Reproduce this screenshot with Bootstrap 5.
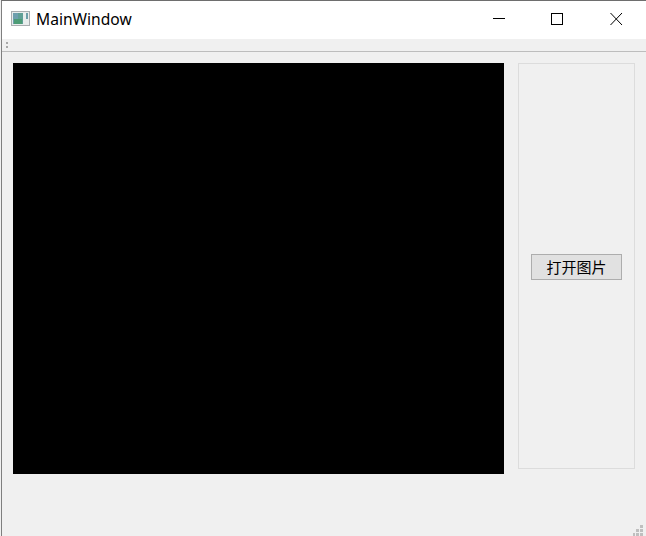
<!DOCTYPE html>
<html lang="zh">
<head>
<meta charset="utf-8">
<title>MainWindow</title>
<link rel="stylesheet" href="https://cdn.jsdelivr.net/npm/bootstrap@5.3.0/dist/css/bootstrap.min.css">
<style>
html,body{margin:0;height:536px;overflow:hidden;background:#f0f0f0;}
.app-win{width:646px;height:536px;padding-left:1px;background:#f0f0f0;position:relative;font-family:"Noto Sans","Liberation Sans",sans-serif;}
.app-edge{border-left:1px solid #7f7f7f;border-top:1px solid #6e6e6e;height:100%;}
.app-title{height:38px;background:#fff;padding-left:9px;padding-bottom:2px;}
.app-title-text{font-family:"Noto Sans","Open Sans",sans-serif;font-size:15.6px;color:#000;margin-left:5px;margin-top:2px;line-height:1;}
.app-caption{width:59px;height:36px;}
.app-tools{height:13px;background:#f0f0f0;border-bottom:1px solid #bdbdbd;padding-left:4px;}
.app-main{padding:11px 11px 0 11px;gap:14px;}
.app-canvas{width:491px;height:411px;background:#000;flex:none;}
.app-panel{width:117px;height:406px;border:1px solid #dcdcdc;flex:none;}
.app-btn{width:91px;height:26px;margin-top:2px;padding:0 0 2px 0;background:#e1e1e1;border:1px solid #adadad;border-radius:0;color:#000;font-family:"Noto Sans CJK SC",sans-serif;font-size:15px;line-height:1;}
.app-btn:hover{background:#e1e1e1;border-color:#adadad;color:#000;}
.app-grip{position:absolute;right:2px;bottom:0;}
</style>
</head>
<body>
<div class="app-win">
  <div class="app-edge d-flex flex-column">
    <div class="app-title d-flex align-items-center">
      <svg width="20" height="16" viewBox="0 0 20 16" aria-hidden="true">
        <rect x="0.5" y="0.5" width="18" height="14" fill="#e8ecec" stroke="#a9adb0"/>
        <rect x="2" y="2" width="10" height="11" fill="#5f9f96"/>
        <rect x="2" y="2" width="5" height="11" fill="#6e9fae"/>
        <rect x="3" y="8" width="8" height="5" fill="#4d9c76"/>
        <rect x="15" y="2" width="2" height="6" fill="#6d9ea9"/>
      </svg>
      <span class="app-title-text">MainWindow</span>
      <div class="ms-auto d-flex">
        <div class="app-caption d-flex align-items-center justify-content-center">
          <svg width="13" height="12" viewBox="0 0 13 12"><path d="M1 5.5H13" stroke="#000" fill="none"/></svg>
        </div>
        <div class="app-caption d-flex align-items-center justify-content-center">
          <svg width="13" height="12" viewBox="0 0 13 12"><rect x="0.5" y="0.5" width="11" height="11" stroke="#000" fill="none"/></svg>
        </div>
        <div class="app-caption d-flex align-items-center justify-content-center">
          <svg width="13" height="12" viewBox="0 0 13 12"><path d="M0.5 0L12 12M12 0L0.5 12" stroke="#000" fill="none"/></svg>
        </div>
      </div>
    </div>
    <div class="app-tools d-flex align-items-center">
      <svg width="3" height="8" viewBox="0 0 3 8"><rect x="0" y="1" width="2" height="2" fill="#a8a8a8"/><rect x="0" y="5" width="2" height="2" fill="#a8a8a8"/></svg>
    </div>
    <div class="app-main d-flex align-items-start">
      <div class="app-canvas"></div>
      <div class="app-panel d-flex align-items-center justify-content-center">
        <button type="button" class="btn app-btn">打开图片</button>
      </div>
    </div>
  </div>
  <svg class="app-grip" width="11" height="11" viewBox="0 0 11 11" aria-hidden="true">
    <g fill="#bfbfbf">
      <rect x="7" y="0" width="3" height="3"/>
      <rect x="3" y="4" width="3" height="3"/><rect x="7" y="4" width="3" height="3"/>
      <rect x="0" y="8" width="2" height="3"/><rect x="3" y="8" width="3" height="3"/><rect x="7" y="8" width="3" height="3"/>
    </g>
  </svg>
</div>
<script src="https://cdn.jsdelivr.net/npm/bootstrap@5.3.0/dist/js/bootstrap.bundle.min.js"></script>
</body>
</html>
